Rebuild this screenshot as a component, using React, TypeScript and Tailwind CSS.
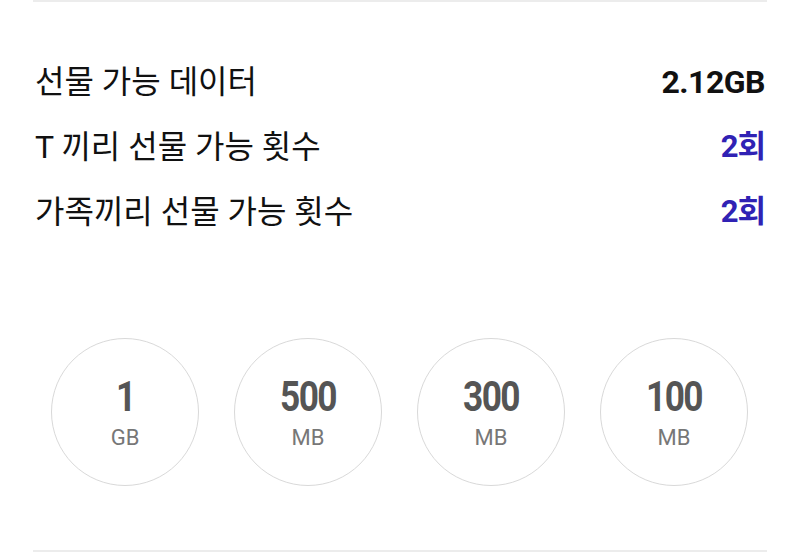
const rows = [
  { label: '선물 가능 데이터', value: '2.12GB', accent: false },
  { label: 'T 끼리 선물 가능 횟수', value: '2회', accent: true },
  { label: '가족끼리 선물 가능 횟수', value: '2회', accent: true },
];

const amounts = [
  { num: '1', unit: 'GB' },
  { num: '500', unit: 'MB' },
  { num: '300', unit: 'MB' },
  { num: '100', unit: 'MB' },
];

export default function App() {
  return (
    <div className="w-[800px] h-[553px] bg-white overflow-hidden font-['Roboto','Noto_Sans_CJK_KR',sans-serif]">
      <div className="mx-[33px] h-[553px] flex flex-col border-t-2 border-[#ececec]">
        {/* 선물 정보 */}
        <div className="mt-[56px] pl-[2px] pr-[2px] flex flex-col">
          {rows.map((r) => (
            <div key={r.label} className="h-[65px] flex items-start justify-between">
              <span className="text-[32px] leading-[48px] text-[#111]">{r.label}</span>
              <span
                className={
                  r.accent
                    ? 'text-[31px] leading-[48px] font-bold text-[#3022b4] tracking-[-1px]'
                    : 'text-[32px] leading-[48px] font-bold text-[#111] tracking-[-0.5px]'
                }
              >
                {r.value}
              </span>
            </div>
          ))}
        </div>

        {/* 용량 선택 */}
        <div className="mt-[85px] pl-[18px] flex gap-[35px]">
          {amounts.map((a) => (
            <div
              key={a.num}
              className="w-[148px] h-[148px] rounded-full border border-[#d9d9d9] flex flex-col items-center justify-center"
            >
              <span className="text-[43px] leading-[44px] font-bold text-[#555] inline-block scale-x-[0.82] tracking-[-2px] mt-[2px]">
                {a.num}
              </span>
              <span className="text-[22px] leading-[28px] text-[#777] mt-[6px]">{a.unit}</span>
            </div>
          ))}
        </div>

        <div className="mt-auto mb-[1px] border-t-2 border-[#ececec]" />
      </div>
    </div>
  );
}
